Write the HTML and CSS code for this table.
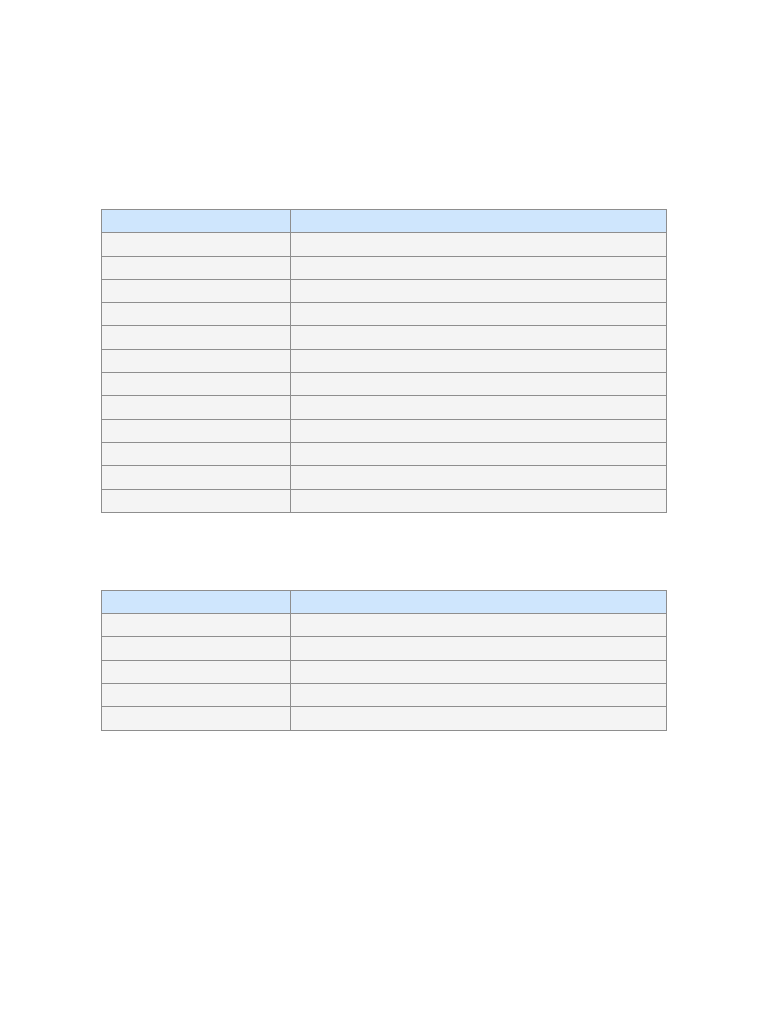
FILE: index.html
```html
<!DOCTYPE html>
<html>
<head>
<meta charset="utf-8">
<link rel="stylesheet" href="styles.css">
</head>
<body>
<main class="page">
  <table class="grid">
    <thead><tr><th class="c1"></th><th class="c2"></th></tr></thead>
    <tbody>
      <tr><td></td><td></td></tr>
      <tr><td></td><td></td></tr>
      <tr><td></td><td></td></tr>
      <tr><td></td><td></td></tr>
      <tr><td></td><td></td></tr>
      <tr><td></td><td></td></tr>
      <tr><td></td><td></td></tr>
      <tr><td></td><td></td></tr>
      <tr><td></td><td></td></tr>
      <tr><td></td><td></td></tr>
      <tr><td></td><td></td></tr>
      <tr><td></td><td></td></tr>
    </tbody>
  </table>
  <table class="grid">
    <thead><tr><th class="c1"></th><th class="c2"></th></tr></thead>
    <tbody>
      <tr><td></td><td></td></tr>
      <tr><td></td><td></td></tr>
      <tr><td></td><td></td></tr>
      <tr><td></td><td></td></tr>
      <tr><td></td><td></td></tr>
    </tbody>
  </table>
</main>
</body>
</html>
```
FILE: styles.css
```css
html, body {
  margin: 0;
  padding: 0;
  background: #ffffff;
  font-family: "Liberation Sans", Arial, sans-serif;
}
.page {
  padding: 209px 101px 0 101px;
  display: flex;
  flex-direction: column;
  gap: 77px;
}
.grid {
  width: 566px;
  border-collapse: collapse;
  table-layout: fixed;
}
.grid th, .grid td {
  border: 1px solid #8e8e8e;
  padding: 0;
  height: 22.3px;
}
.grid th {
  background: #cfe6fd;
}
.grid td {
  background: #f4f4f4;
}
.grid .c1 {
  width: 188px;
}
```
